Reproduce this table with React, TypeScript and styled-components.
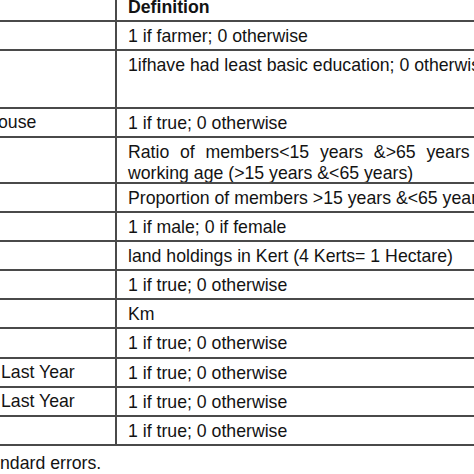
import React from "react";
import styled, { createGlobalStyle } from "styled-components";

const GlobalStyle = createGlobalStyle`
  html, body {
    margin: 0;
    padding: 0;
    background: #ffffff;
    overflow: hidden;
  }
  body {
    font-family: "Liberation Sans", Arial, Helvetica, sans-serif;
    color: #131313;
  }
`;

const Page = styled.div`
  width: 474px;
  height: 474px;
  overflow: hidden;
  background: #ffffff;
`;

const Table = styled.div`
  display: flex;
  flex-direction: column;
  width: 474px;
`;

const Row = styled.div<{ $h: number }>`
  display: grid;
  grid-template-columns: 117px 1fr;
  height: ${(p) => p.$h}px;
  box-sizing: border-box;
  border-bottom: 2px solid #4a4a4a;
  overflow: hidden;
`;

const LeftCell = styled.div<{ $header?: boolean; $shift?: number }>`
  border-right: 2px solid #4a4a4a;
  padding: ${(p) => (p.$header ? "0" : "3px")} 0 0 0;
  font-size: 17.7px;
  line-height: ${(p) => (p.$header ? "14px" : "21px")};
  white-space: nowrap;
  overflow: hidden;
  text-indent: ${(p) => p.$shift ?? 0}px;
`;

const RightCell = styled.div<{ $header?: boolean }>`
  padding: ${(p) => (p.$header ? "0" : "3.5px")} 0 0 11px;
  font-size: 17.7px;
  line-height: ${(p) => (p.$header ? "14px" : "21px")};
  font-weight: ${(p) => (p.$header ? 700 : 400)};
  white-space: nowrap;
  overflow: hidden;
`;

const Line = styled.div<{ $spacing?: number }>`
  word-spacing: ${(p) => p.$spacing ?? 0}px;
`;

const Note = styled.div`
  font-size: 17.7px;
  line-height: 21px;
  padding-top: 7px;
  white-space: nowrap;
`;

type RowData = { left: string; right: React.ReactNode; h: number; shift?: number };

const rows: RowData[] = [
  { left: "", right: "1 if farmer; 0 otherwise", h: 29 },
  { left: "", right: "1ifhave had least basic education; 0 otherwise", h: 58 },
  { left: "ouse", right: "1 if true; 0 otherwise", h: 29, shift: -2 },
  {
    left: "",
    right: (
      <>
        <Line $spacing={5.8}>Ratio of members&lt;15 years &amp;&gt;65 years of</Line>
        <Line>working age (&gt;15 years &amp;&lt;65 years)</Line>
      </>
    ),
    h: 46,
  },
  { left: "", right: "Proportion of members >15 years &<65 years", h: 29 },
  { left: "", right: "1 if male; 0 if female", h: 29 },
  { left: "", right: "land holdings in Kert (4 Kerts= 1 Hectare)", h: 29 },
  { left: "", right: "1 if true; 0 otherwise", h: 29 },
  { left: "", right: "Km", h: 29 },
  { left: "", right: "1 if true; 0 otherwise", h: 30 },
  { left: "Last Year", right: "1 if true; 0 otherwise", h: 29, shift: 1 },
  { left: "Last Year", right: "1 if true; 0 otherwise", h: 29, shift: 1 },
  { left: "", right: "1 if true; 0 otherwise", h: 29 },
];

export default function App() {
  return (
    <Page>
      <GlobalStyle />
      <Table>
        <Row $h={22}>
          <LeftCell $header />
          <RightCell $header>Definition</RightCell>
        </Row>
        {rows.map((r, i) => (
          <Row key={i} $h={r.h}>
            <LeftCell $shift={r.shift}>{r.left}</LeftCell>
            <RightCell>{r.right}</RightCell>
          </Row>
        ))}
      </Table>
      <Note>ndard errors.</Note>
    </Page>
  );
}
